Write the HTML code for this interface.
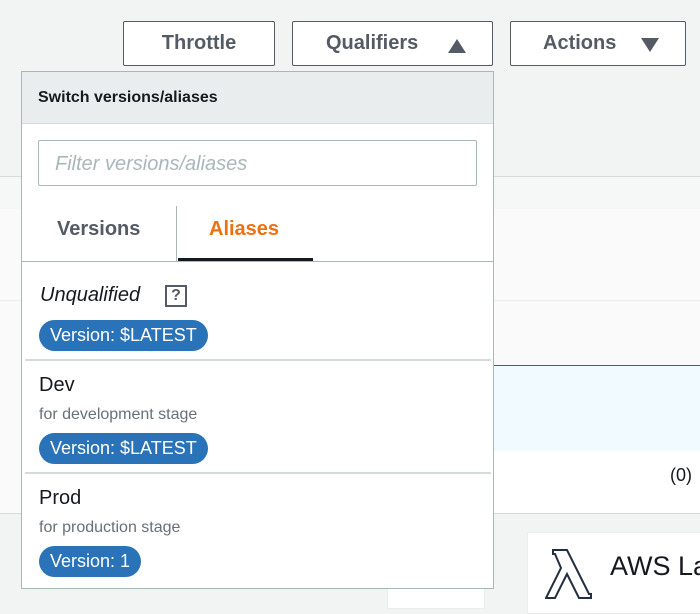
<!DOCTYPE html><html><head><style>
body{margin:0;width:700px;height:603px;overflow:hidden;background:#f2f3f3;font-family:"Liberation Sans",sans-serif;position:relative}
.a{position:absolute;white-space:nowrap}
.btn{position:absolute;top:21px;height:43px;border:1px solid #545b64;border-radius:2px;background:#fff;color:#545b64;font-weight:bold;font-size:20px;line-height:43px;text-align:center;box-sizing:content-box}
.badge{position:absolute;left:39px;height:31px;border-radius:16px;background:#2a73b8;color:#fff;font-size:18px;line-height:31px;padding:0 11px}
.sep{position:absolute;left:25px;width:466px;height:2px;background:#d5dbdb}
.tri{position:absolute;top:17px;width:0;height:0;border-left:9px solid transparent;border-right:9px solid transparent}
</style></head><body>
<div class="a" style="left:0;top:176px;width:700px;height:1px;background:#d5dbdb"></div>
<div class="a" style="left:0;top:177px;width:700px;height:32px;background:#f6f7f7"></div>
<div class="a" style="left:0;top:209px;width:700px;height:91px;background:#fafafa"></div>
<div class="a" style="left:0;top:300px;width:700px;height:1px;background:#eaeded"></div>
<div class="a" style="left:0;top:301px;width:700px;height:213px;background:#fafafa"></div>
<div class="a" style="left:490px;top:365px;width:210px;height:85px;background:#f1faff;border-top:1px solid #0073bb;border-bottom:1px solid #0073bb"></div>
<div class="a" style="left:490px;top:451px;width:210px;height:62px;background:#fff"></div>
<div class="a" style="left:670px;top:465px;font-size:18px;color:#16191f">(0)</div>
<div class="a" style="left:0;top:513px;width:700px;height:1px;background:#d5dbdb"></div>
<div class="a" style="left:387px;top:577px;width:96px;height:30px;background:#fff;border:1px solid #eaeded"></div>
<div class="a" style="left:527px;top:532px;width:180px;height:80px;background:#fff;border:1px solid #eaeded"></div>
<svg class="a" style="left:545px;top:548px" width="50" height="52" viewBox="0 0 50 52"><path d="M8 2h14l22 44h2v4H34L22 26 10 50H1l15-30L10 6H8z" fill="none" stroke="#232f3e" stroke-width="2"/></svg>
<div class="a" style="left:610px;top:551px;font-size:27px;color:#16191f">AWS La</div>
<div class="btn" style="left:123px;width:150px">Throttle</div>
<div class="btn" style="left:292px;width:199px;text-align:left"><span style="margin-left:33px">Qualifiers</span><span class="tri" style="left:155px;border-bottom:14px solid #545b64"></span></div>
<div class="btn" style="left:510px;width:174px;text-align:left"><span style="margin-left:32px">Actions</span><span class="tri" style="left:130px;top:16px;border-top:14px solid #545b64"></span></div>
<div class="a" style="left:21px;top:71px;width:471px;height:516px;background:#fff;border:1px solid #aab7b8">
 <div class="a" style="left:0;top:0;width:471px;height:51px;background:#eaeded;border-bottom:1px solid #d5dbdb"></div>
 <div class="a" style="left:16px;top:17px;font-weight:bold;font-size:16px;color:#16191f">Switch versions/aliases</div>
 <div class="a" style="left:16px;top:68px;width:437px;height:44px;border:1px solid #aab7b8;border-radius:2px"></div>
 <div class="a" style="left:33px;top:81px;font-style:italic;font-size:20px;color:#aab7b8">Filter versions/aliases</div>
 <div class="a" style="left:35px;top:146px;font-weight:bold;font-size:20px;color:#545b64">Versions</div>
 <div class="a" style="left:154px;top:134px;width:1px;height:55px;background:#aab7b8"></div>
 <div class="a" style="left:187px;top:146px;font-weight:bold;font-size:20px;color:#ec7211">Aliases</div>
 <div class="a" style="left:156px;top:186px;width:135px;height:3px;background:#16191f"></div>
 <div class="a" style="left:0;top:189px;width:471px;height:1px;background:#aab7b8"></div>
 <div class="a" style="left:18px;top:212px;font-style:italic;font-size:20px;color:#16191f">Unqualified</div>
 <div class="a" style="left:143px;top:213px;width:22px;height:22px;border:2px solid #545b64;box-sizing:border-box;font-size:16px;font-weight:bold;text-align:center;line-height:18px;color:#545b64">?</div>
</div>
<div class="badge" style="top:320px">Version: $LATEST</div>
<div class="sep" style="top:359px"></div>
<div class="a" style="left:39px;top:374px;font-size:20px;color:#16191f">Dev</div>
<div class="a" style="left:39px;top:406px;font-size:16px;color:#687078">for development stage</div>
<div class="badge" style="top:433px">Version: $LATEST</div>
<div class="sep" style="top:472px"></div>
<div class="a" style="left:39px;top:487px;font-size:20px;color:#16191f">Prod</div>
<div class="a" style="left:39px;top:519px;font-size:16px;color:#687078">for production stage</div>
<div class="badge" style="top:546px">Version: 1</div>
</body></html>
